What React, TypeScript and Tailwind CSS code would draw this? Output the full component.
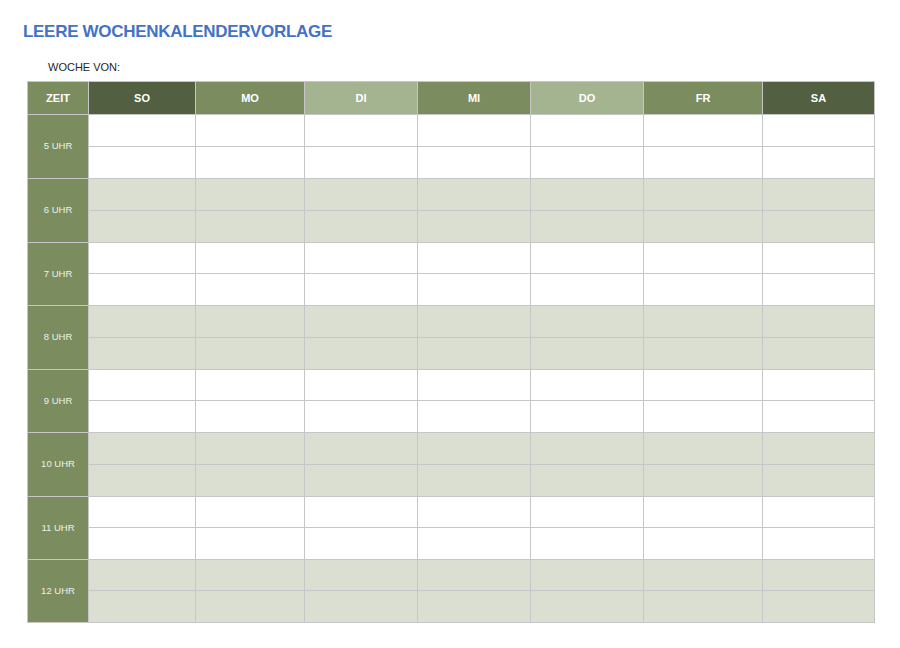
import React from "react";

const days = [
  { label: "SO", bg: "bg-[#525f40]" },
  { label: "MO", bg: "bg-[#7b8d5f]" },
  { label: "DI", bg: "bg-[#a5b490]" },
  { label: "MI", bg: "bg-[#7b8d5f]" },
  { label: "DO", bg: "bg-[#a5b490]" },
  { label: "FR", bg: "bg-[#7b8d5f]" },
  { label: "SA", bg: "bg-[#525f40]" },
];

const hours = ["5 UHR", "6 UHR", "7 UHR", "8 UHR", "9 UHR", "10 UHR", "11 UHR", "12 UHR"];

export default function App() {
  const font = { fontFamily: '"Liberation Sans", Arial, sans-serif' };
  return (
    <div className="w-[900px] h-[648px] bg-white relative" style={font}>
      <div className="pl-[23px] pt-[22px]">
        <h1 className="text-[17px] leading-[20px] font-bold tracking-[-0.3px] text-[#4472c4]">
          LEERE WOCHENKALENDERVORLAGE
        </h1>
        <div className="pl-[25px] mt-[18px] text-[11px] leading-[14px] text-[#262626]">WOCHE VON:</div>
      </div>
      <div className="ml-[27px] mt-[7px] w-[848px] border-l border-t border-[#c6c6c6] grid grid-cols-[61px_107px_109px_113px_113px_113px_119px_112px] grid-rows-[33px_32px_32px_32px_32px_31px_32px_32px_32px_31px_32px_32px_32px_31px_32px_31px_32px]">
        <div className="bg-[#7b8d5f] border-r border-b border-[#c6c6c6] flex items-center justify-center text-white font-bold text-[11px]">
          ZEIT
        </div>
        {days.map((d) => (
          <div
            key={d.label}
            className={`${d.bg} border-r border-b border-[#c6c6c6] flex items-center justify-center text-white font-bold text-[11px]`}
          >
            {d.label}
          </div>
        ))}
        {hours.map((h, i) => {
          const shaded = i % 2 === 1;
          const cellBg = shaded ? "bg-[#dbdfd2]" : "bg-white";
          return (
            <React.Fragment key={h}>
              <div className="row-span-2 bg-[#7b8d5f] border-r border-b border-[#c6c6c6] flex items-center justify-center text-[#eef1e8] text-[9.5px]">
                {h}
              </div>
              {days.map((d) => (
                <div key={d.label + "a"} className={`${cellBg} border-r border-b border-[#c6c6c6]`} />
              ))}
              {days.map((d) => (
                <div key={d.label + "b"} className={`${cellBg} border-r border-b border-[#c6c6c6]`} />
              ))}
            </React.Fragment>
          );
        })}
      </div>
    </div>
  );
}
